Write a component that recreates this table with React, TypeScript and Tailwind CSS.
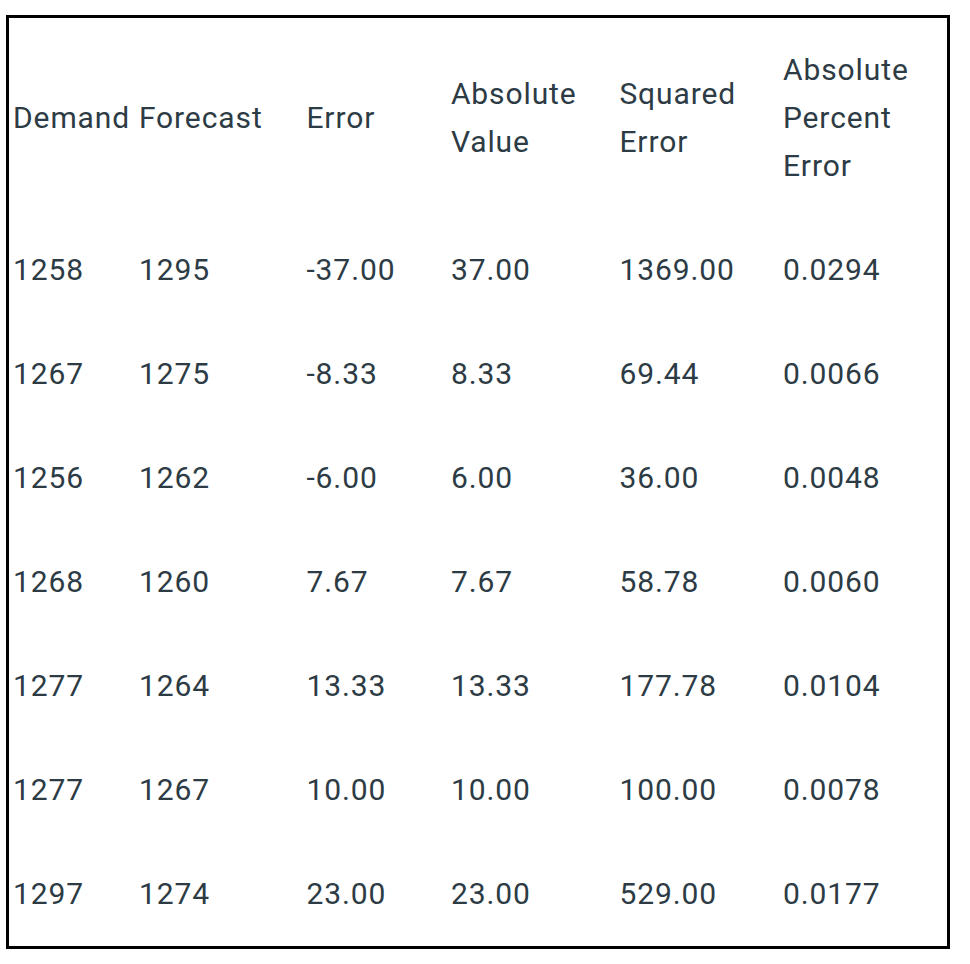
const headers = [
  ['Demand'],
  ['Forecast'],
  ['Error'],
  ['Absolute', 'Value'],
  ['Squared', 'Error'],
  ['Absolute', 'Percent', 'Error'],
]

const rows = [
  ['1258', '1295', '-37.00', '37.00', '1369.00', '0.0294'],
  ['1267', '1275', '-8.33', '8.33', '69.44', '0.0066'],
  ['1256', '1262', '-6.00', '6.00', '36.00', '0.0048'],
  ['1268', '1260', '7.67', '7.67', '58.78', '0.0060'],
  ['1277', '1264', '13.33', '13.33', '177.78', '0.0104'],
  ['1277', '1267', '10.00', '10.00', '100.00', '0.0078'],
  ['1297', '1274', '23.00', '23.00', '529.00', '0.0177'],
]

const widths = ['w-[127px]', 'w-[167px]', 'w-[144px]', 'w-[168px]', 'w-[163px]', 'w-[169px]']

export default function App() {
  return (
    <div className="min-h-screen bg-white pt-[15px] pl-[6px]" style={{ fontFamily: 'Roboto, "Noto Sans", sans-serif' }}>
      <table className="table-fixed border-collapse border-[3px] border-black w-[944px] text-[30px] leading-[48px] tracking-[0.9px] text-[#2d3b45]">
        <colgroup>
          {widths.map((w, i) => (
            <col key={i} className={w} />
          ))}
        </colgroup>
        <thead>
          <tr>
            {headers.map((h, i) => (
              <th key={i} className="font-normal text-left align-middle py-[28px] pl-[4px] pr-0 whitespace-nowrap">
                {h.map((line, j) => (
                  <div key={j}>{line}</div>
                ))}
              </th>
            ))}
          </tr>
        </thead>
        <tbody>
          {rows.map((r, i) => (
            <tr key={i}>
              {r.map((c, j) => (
                <td key={j} className="text-left align-middle py-[28px] pl-[4px] pr-0">
                  {c}
                </td>
              ))}
            </tr>
          ))}
        </tbody>
      </table>
    </div>
  )
}
